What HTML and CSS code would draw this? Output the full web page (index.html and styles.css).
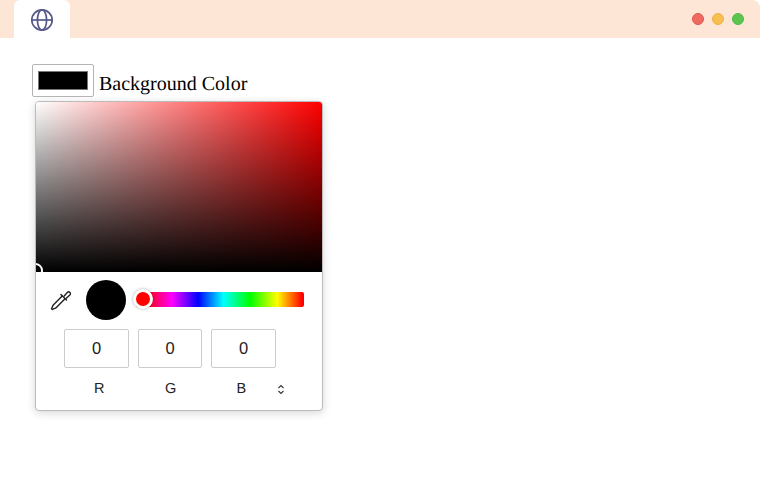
FILE: index.html
```html
<!DOCTYPE html>
<html lang="en">
<head>
<meta charset="utf-8">
<title>Background Color</title>
<link rel="stylesheet" href="styles.css">
</head>
<body>
<header class="topbar">
  <div class="tab">
    <svg class="globe" width="24" height="24" viewBox="0 0 24 24" fill="none" stroke="#55598a" stroke-width="1.7">
      <circle cx="12" cy="12" r="10.2"/>
      <ellipse cx="12" cy="12" rx="4.6" ry="10.2"/>
      <path d="M1.8 12H22.2"/>
    </svg>
  </div>
  <div class="dots">
    <span class="dot dot-red"></span>
    <span class="dot dot-yellow"></span>
    <span class="dot dot-green"></span>
  </div>
</header>
<main class="content">
  <div class="field">
    <button class="swatch" type="button"><span class="swatch-fill"></span></button>
    <span class="field-label">Background Color</span>
  </div>
  <section class="picker">
    <div class="sat">
      <span class="sat-handle"></span>
    </div>
    <div class="controls">
      <svg class="dropper" width="24" height="24" viewBox="0 0 24 24" fill="none" stroke="#222" stroke-width="1.4" stroke-linejoin="round" stroke-linecap="round">
        <path d="M13.2 8 4.300 16.900c-.6.6-.8 1.300-.9 2.100l-.9 1.700.8.800 1.700-.9c.8-.1 1.500-.3 2.100-.9L16 10.800"/>
        <path d="M11.900 6.500l5.600 5.600"/>
        <path d="M15.200 8l3.100-3.500c.8-.8 1.900-.8 2.600-.1.700.7.700 1.800-.1 2.600L17.300 10.200"/>
      </svg>
      <span class="preview"></span>
      <div class="hue"><span class="hue-thumb"></span></div>
    </div>
    <div class="inputs">
      <input class="num num-r" type="text" value="0" aria-label="R">
      <input class="num num-g" type="text" value="0" aria-label="G">
      <input class="num num-b" type="text" value="0" aria-label="B">
    </div>
    <div class="labels">
      <span class="lab lab-r">R</span>
      <span class="lab lab-g">G</span>
      <span class="lab lab-b">B</span>
      <svg class="toggle" width="8" height="11" viewBox="0 0 8 11" fill="none" stroke="#333" stroke-width="1.1">
        <path d="M1.500 4 4 1.500 6.500 4"/>
        <path d="M1.500 7 4 9.500 6.500 7"/>
      </svg>
    </div>
  </section>
</main>
</body>
</html>
```

FILE: styles.css
```css
* { box-sizing: border-box; }
html, body { margin: 0; padding: 0; }
body {
  width: 760px;
  height: 491px;
  overflow: hidden;
  background: #fff;
  font-family: "Liberation Serif", serif;
  text-rendering: geometricPrecision;
}
.topbar {
  height: 38px;
  background: #fee6d6;
  border-top-right-radius: 8px;
  display: flex;
  justify-content: space-between;
  align-items: center;
  padding: 0 16px 0 14px;
}
.tab {
  width: 56px;
  height: 38px;
  background: #fff;
  border-radius: 6px 6px 0 0;
  display: flex;
  align-items: center;
  justify-content: center;
  padding-top: 2px;
}
.globe { display: block; }
.dots { display: flex; gap: 8px; }
.dot { width: 12px; height: 12px; border-radius: 50%; display: block; }
.dot-red { background: #ef6a5f; border: 1px solid #e0564f; }
.dot-yellow { background: #f7bf4f; border: 1px solid #eeb245; }
.dot-green { background: #5cc550; border: 1px solid #52b848; }
.content { padding: 26px 0 0 32px; }
.field { display: flex; align-items: center; height: 33px; }
.swatch {
  width: 62px;
  height: 33px;
  padding: 0;
  background: #fff;
  border: 1px solid #b4b4b4;
  border-radius: 2px;
  display: flex;
  align-items: center;
  justify-content: center;
}
.swatch-fill {
  display: block;
  width: 50px;
  height: 19px;
  background: #000;
  border: 1px solid #777;
}
.field-label {
  margin-left: 5px;
  font-size: 20px;
  line-height: 23px;
  padding-top: 8px;
  color: #000;
}
.picker {
  width: 288px;
  height: 310px;
  margin: 4px 0 0 3px;
  background: #fff;
  border: 1px solid #bbb;
  border-radius: 4px;
  box-shadow: 0 2px 8px rgba(0,0,0,.16);
  overflow: hidden;
  font-family: "Liberation Sans", sans-serif;
}
.sat {
  position: relative;
  height: 170px;
  overflow: hidden;
  background:
    linear-gradient(to top, #000, rgba(0,0,0,0)),
    linear-gradient(to right, #fff, #f00);
}
.sat-handle {
  position: absolute;
  left: -8px;
  bottom: -6px;
  width: 15px;
  height: 15px;
  border: 2.500px solid #fff;
  border-radius: 50%;
}
.controls {
  display: flex;
  align-items: center;
  height: 56px;
  padding: 0 18px 0 13px;
}
.dropper { display: block; flex: none; }
.preview {
  flex: none;
  display: block;
  width: 40px;
  height: 40px;
  margin-left: 13px;
  border-radius: 50%;
  background: #000;
}
.hue {
  position: relative;
  flex: 1;
  height: 15px;
  margin: 0 0 1px 10px;
  border-radius: 2px;
  background: linear-gradient(to right, #f00 6%, #f0f 21.400%, #00f 37%, #0ff 52%, #0f0 68%, #ff0 84%, #f00 99%);
}
.hue-thumb {
  position: absolute;
  left: -3px;
  top: -3px;
  width: 20px;
  height: 20px;
  border: 3px solid #fff;
  border-radius: 50%;
  background: #f00;
  box-shadow: 0 0 3px rgba(0,0,0,.35);
}
.inputs {
  display: flex;
  padding: 1px 0 0 28px;
}
.num {
  display: block;
  height: 39px;
  padding: 0;
  text-align: center;
  border: 1px solid #ccc;
  border-radius: 2px;
  background: #fff;
  color: #222;
  font: 16.500px "Liberation Sans", sans-serif;
  outline: none;
}
.num-r { width: 65px; }
.num-g { width: 64px; margin-left: 9px; }
.num-b { width: 65px; margin-left: 9px; }
.labels {
  display: flex;
  align-items: center;
  height: 16px;
  margin-top: 13px;
  padding-left: 58px;
  font-size: 14.500px;
  line-height: 16px;
  color: #222;
}
.lab { display: block; }
.lab-r { width: 71px; }
.lab-g { width: 71.500px; }
.lab-b { width: 40px; }
.toggle { display: block; flex: none; }
```
